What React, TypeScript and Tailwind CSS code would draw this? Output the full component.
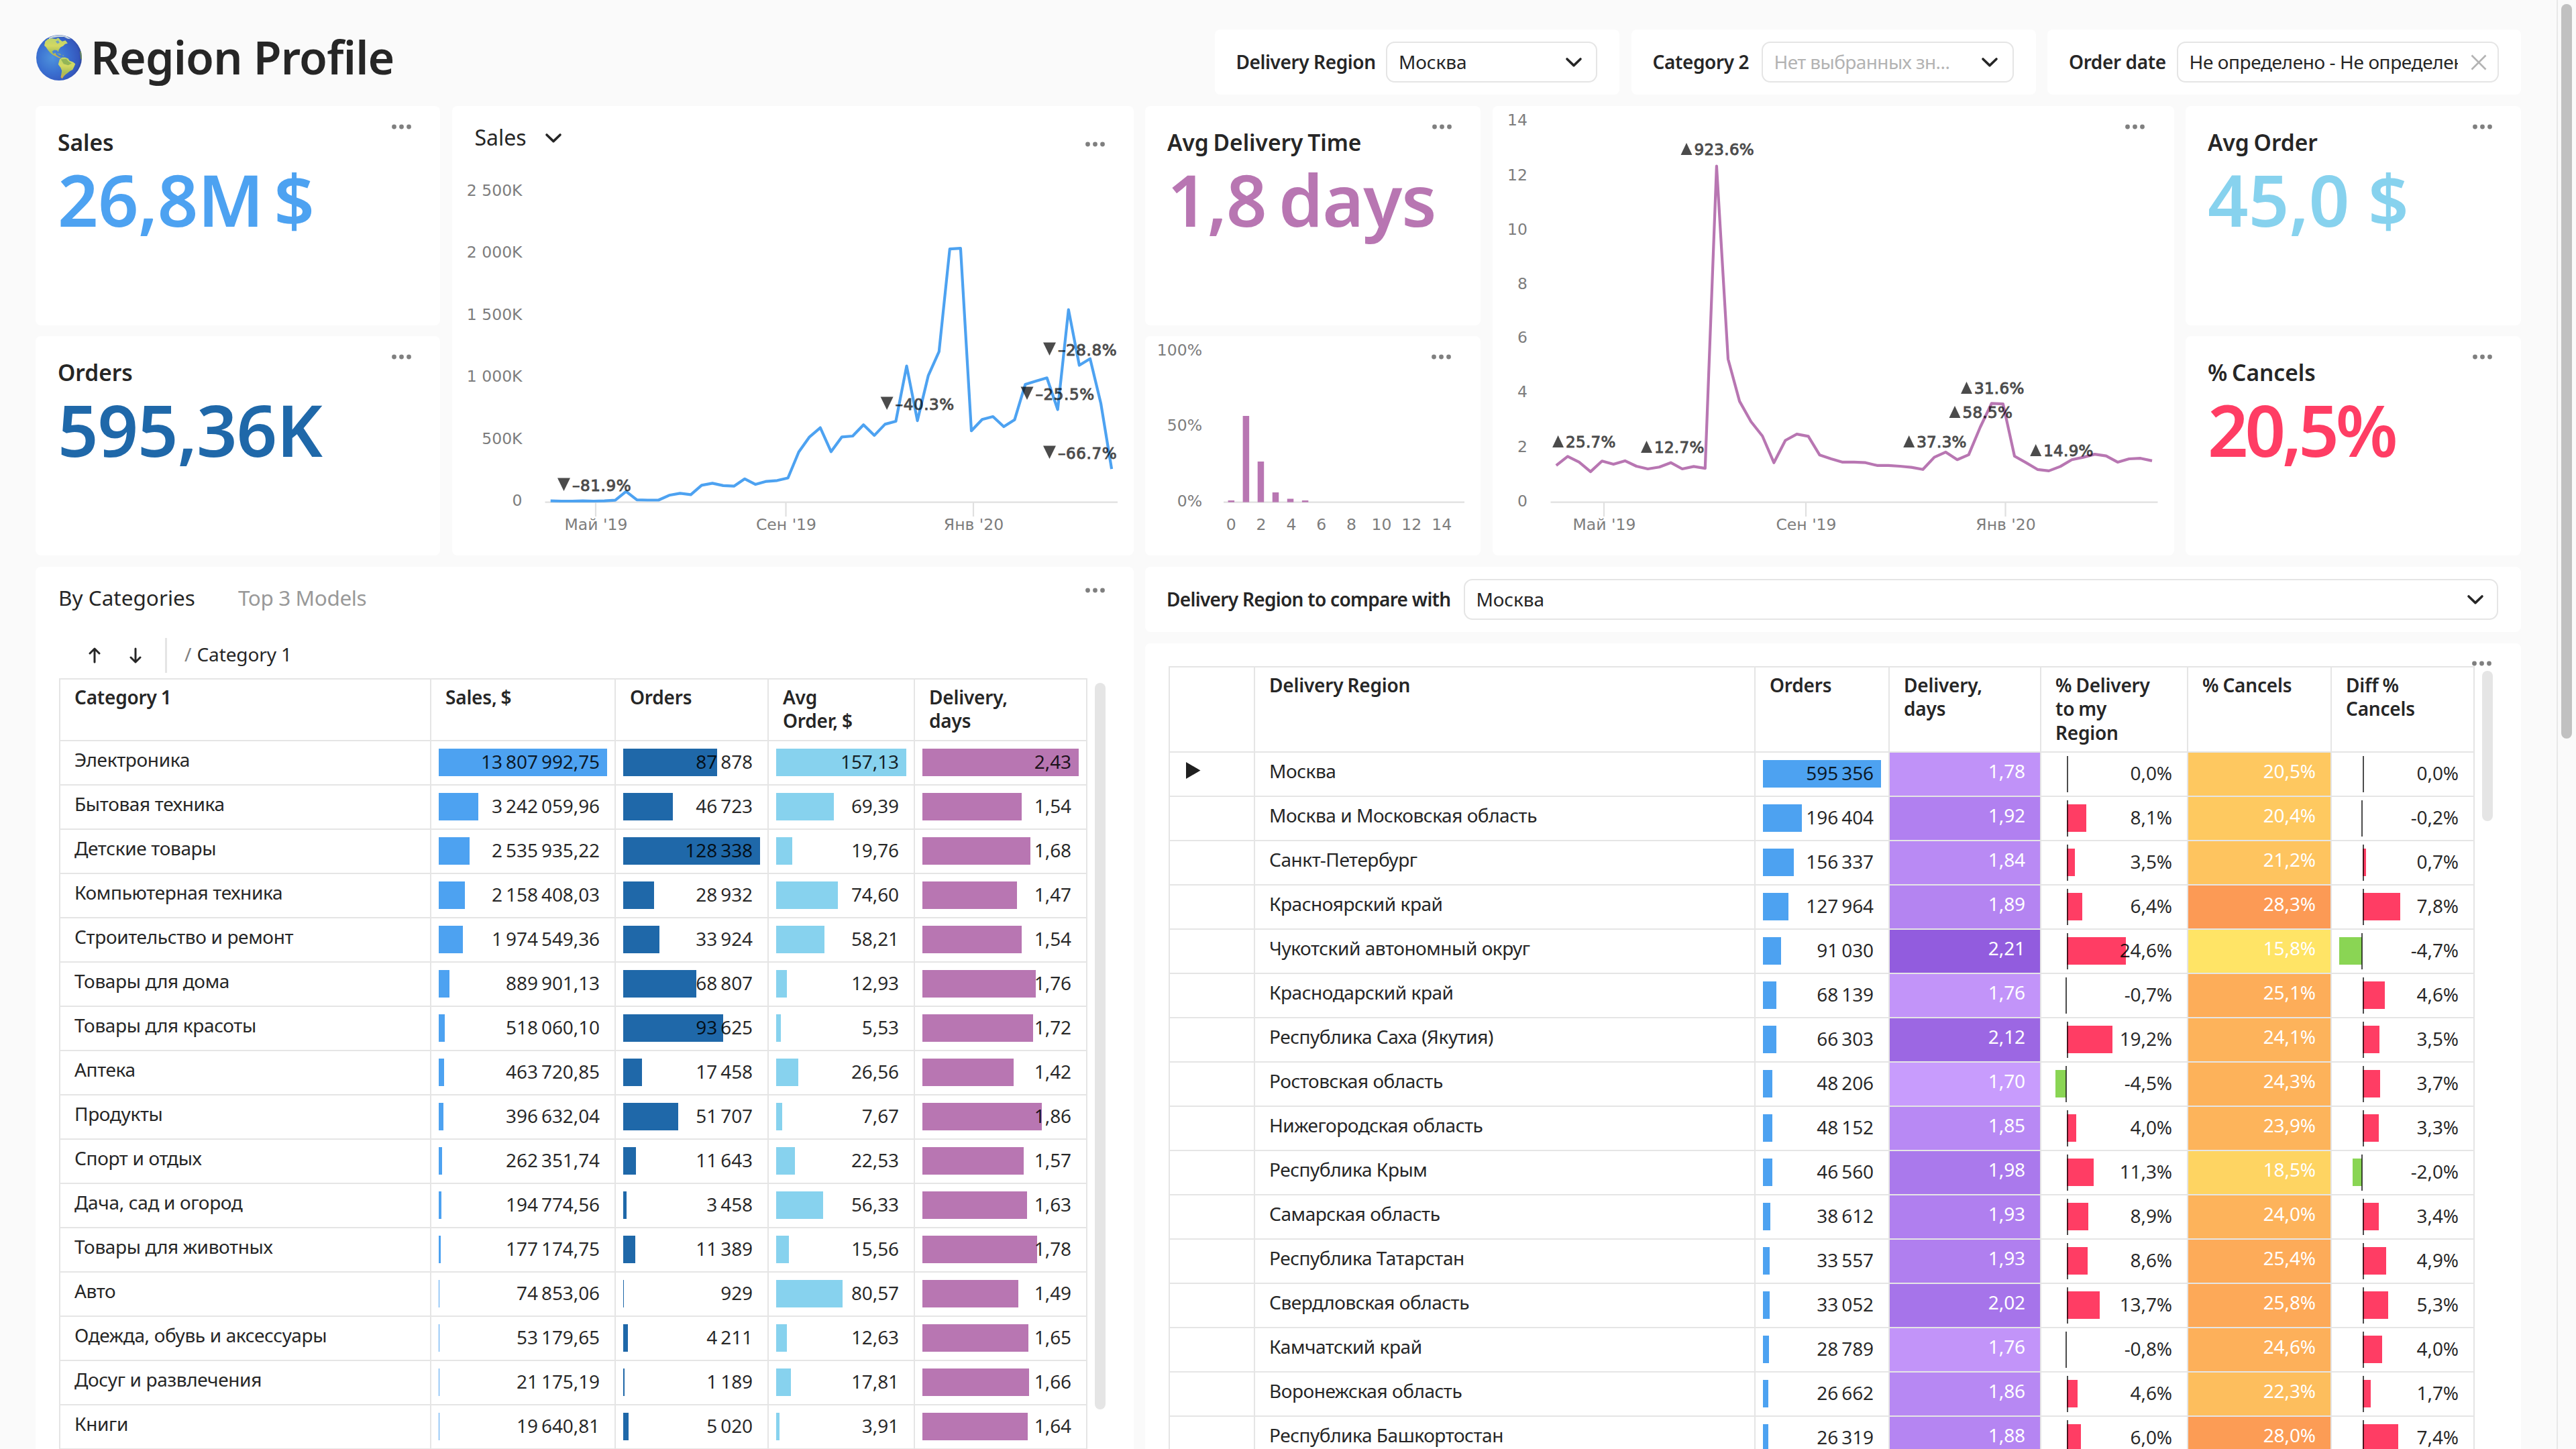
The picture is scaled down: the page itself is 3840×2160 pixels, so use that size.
import type { ReactNode } from "react";

const num = "whitespace-nowrap [word-spacing:-2px] tracking-[-0.1px]";

function Dots({ className = "" }: { className?: string }) {
  return (
    <svg className={`absolute h-2 w-[30px] ${className}`} viewBox="0 0 30 8" fill="#7f7f7f">
      <circle cx="3.5" cy="4" r="3.4" />
      <circle cx="14.5" cy="4" r="3.4" />
      <circle cx="25.5" cy="4" r="3.4" />
    </svg>
  );
}

function Chevron({ className = "" }: { className?: string }) {
  return (
    <svg className={`h-4 w-7 shrink-0 ${className}`} viewBox="0 0 28 16" fill="none" stroke="#262626" strokeWidth="3.6" strokeLinecap="round" strokeLinejoin="round">
      <path d="M4 3 L14 12.6 L24 3" />
    </svg>
  );
}

function Globe() {
  return (
    <svg className="h-[68px] w-[68px] shrink-0" viewBox="42 37 203 203">
      <defs>
        <radialGradient id="sea" cx="0.35" cy="0.5" r="0.68">
          <stop offset="0" stopColor="#4f93dc" />
          <stop offset="0.5" stopColor="#3a6fd0" />
          <stop offset="0.85" stopColor="#3558bd" />
          <stop offset="1" stopColor="#2b4191" />
        </radialGradient>
        <linearGradient id="land" x1="0" y1="0" x2="0" y2="1">
          <stop offset="0" stopColor="#bcd46c" />
          <stop offset="0.4" stopColor="#d3d862" />
          <stop offset="0.7" stopColor="#a9bf58" />
          <stop offset="1" stopColor="#d3a94a" />
        </linearGradient>
        <clipPath id="disc">
          <circle cx="143.5" cy="138.5" r="101.5" />
        </clipPath>
      </defs>
      <circle cx="143.5" cy="138.5" r="101.5" fill="url(#sea)" />
      <g clipPath="url(#disc)">
        <path d="M98 50 Q118 38 150 38 L178 43 L196 56 L182 54 L166 46 L140 46 L116 50 L100 56Z" fill="#c9d6dd" />
        <path d="M82 66 L94 56 L112 53 L130 56 L140 50 L150 60 L158 66 L172 62 L182 74 L170 78 L162 86 L150 92 L142 104 L140 114 L135 106 L122 104 L113 110 L117 121 L128 117 L130 126 L142 134 L152 138 L146 141 L132 134 L116 126 L104 116 L94 104 L86 92 L78 84Z" fill="url(#land)" />
        <path d="M128 66 L140 62 L146 72 L136 76Z" fill="#6e9fc6" />
        <path d="M134 119 L148 121 L154 126 L146 125Z M158 127 L166 129 L162 132Z" fill="#a9bf58" />
        <path d="M146 146 L156 138 L170 137 L184 142 L190 152 L206 158 L216 166 L210 180 L204 192 L192 198 L180 208 L172 214 L164 222 L158 232 L151 226 L154 210 L156 196 L150 182 L140 168Z" fill="url(#land)" />
        <path d="M152 146 L176 144 L186 156 L200 164 L184 172 L164 166Z" fill="#93b557" />
        <path d="M236 112 L248 104 L248 152 L240 142Z" fill="#6b8c5a" />
      </g>
    </svg>
  );
}

function Field({ label, width, children }: { label: string; width: string; children: ReactNode }) {
  return (
    <div className={`flex h-[97px] items-center justify-between rounded-lg bg-white pr-[33px] pl-[32px] ${width}`}>
      <span className="pb-0.5 text-[28px] font-semibold tracking-[-0.4px] whitespace-nowrap">{label}</span>
      {children}
    </div>
  );
}

const box = "flex h-[61px] items-center justify-between rounded-[13px] border-2 border-[#e5e5e5] bg-white pl-[17px] text-[28px] leading-[55px] whitespace-nowrap";

function Metric({ title, value, color }: { title: string; value: string; color: string }) {
  return (
    <section className="relative h-[327px] rounded-lg bg-white pt-[32px] pl-[33px]">
      <h2 className="text-[33.5px] leading-[44px] font-semibold whitespace-nowrap [word-spacing:-2px]">{title}</h2>
      <p className={`mt-[3px] text-[106px] leading-[120px] font-semibold whitespace-nowrap ${color}`}>{value}</p>
      <Dots className="top-[27px] right-[42px]" />
    </section>
  );
}

type Mark = [number, number, string];

function Marks({ items, down = false }: { items: Mark[]; down?: boolean }) {
  return (
    <g fill="#000" opacity="0.7" fontSize="23" fontFamily="'DejaVu Sans', sans-serif">
      {items.map(([x, y, t]) => (
        <g key={t}>
          <path d={down ? `M${x - 1} ${y - 19.5}h19l-9.5 19.5z` : `M${x} ${y}h17l-8.5 -18z`} />
          <text x={x + (down ? 21 : 20)} y={y} stroke="#000" strokeWidth="1" letterSpacing={down ? 0.6 : 0.3}>
            {t}
          </text>
        </g>
      ))}
    </g>
  );
}

function Axis({ x1, x2, labelX, ticks, rows }: { x1: number; x2: number; labelX: number; ticks: [number, string][]; rows: [number, string][] }) {
  return (
    <g fontSize="23.5" fill="#7d7d7d" fontFamily="'DejaVu Sans', sans-serif">
      <path d={`M${x1} 748.7H${x2}`} stroke="#e0e0e0" strokeWidth="2.2" />
      {ticks.map(([x, t]) => (
        <g key={t}>
          <path d={`M${x} 749v21`} stroke="#e0e0e0" strokeWidth="2.2" />
          <text x={x + 0.5} y="789.5" textAnchor="middle">{t}</text>
        </g>
      ))}
      {rows.map(([y, t]) => (
        <text key={t} x={labelX} y={y} textAnchor="end">{t}</text>
      ))}
    </g>
  );
}

// Weekly sales, thousands
const sales = [
  10, 8, 8, 10, 8, 10, 15, 86, 18, 16, 16, 55, 71, 60, 136, 152, 133, 129, 188, 143, 167, 174, 195, 405, 526, 600, 407, 526, 533, 624, 538, 628, 652,
  1098, 657, 1019, 1214, 2042, 2047, 575, 667, 690, 609, 664, 950, 976, 1002, 747, 1552, 1104, 1157, 797, 267,
];

// Weekly average delivery time, days
const delivery = [
  1.35, 1.68, 1.47, 1.12, 1.51, 1.39, 1.52, 1.32, 1.22, 1.29, 1.45, 1.22, 1.31, 1.24, 12.35, 5.26, 3.71, 2.96, 2.43, 1.45, 2.27, 2.5, 2.42, 1.73, 1.59,
  1.47, 1.47, 1.45, 1.35, 1.35, 1.32, 1.28, 1.2, 1.65, 1.84, 1.56, 1.74, 2.75, 3.63, 3.61, 1.69, 1.45, 1.2, 1.15, 1.31, 1.56, 1.65, 1.76, 1.7, 1.47,
  1.59, 1.61, 1.52,
];

function line(data: number[], x0: number, step: number, scale: number) {
  return data.map((v, i) => `${(x0 + step * i).toFixed(1)},${(748.5 - v * scale).toFixed(1)}`).join(" ");
}

function SalesChart() {
  return (
    <section className="relative h-[670px] rounded-lg bg-white">
      <div className="flex h-[70px] items-center gap-[26px] pt-[24px] pl-[34px]">
        <span className="text-[32px] leading-[46px] font-[450]">Sales</span>
        <Chevron className="mt-0.5" />
      </div>
      <svg className="block h-[600px] w-[1016px]" viewBox="674 228 1016 600">
        <Axis
          x1={812.5}
          x2={1666}
          labelX={778.5}
          ticks={[[888, "Май '19"], [1171.5, "Сен '19"], [1451, "Янв '20"]]}
          rows={[[292, "2 500K"], [384, "2 000K"], [476.5, "1 500K"], [569, "1 000K"], [662, "500K"], [753.5, "0"]]}
        />
        <polyline points={line(sales, 820.7, 16.085, 0.1848)} fill="none" stroke="#4da2f1" strokeWidth="4.2" strokeLinejoin="round" />
        <Marks
          down
          items={[[832, 732, "–81.9%"], [1313.6, 611, "–40.3%"], [1522.5, 596, "–25.5%"], [1556, 530, "–28.8%"], [1556, 684, "–66.7%"]]}
        />
      </svg>
      <Dots className="top-[53px] right-[42px]" />
    </section>
  );
}

function DeliveryChart() {
  return (
    <section className="relative h-[670px] rounded-lg bg-white">
      <svg className="block h-[670px] w-[1016px]" viewBox="2224.5 158 1016 670">
        <Axis
          x1={2311}
          x2={3216}
          labelX={2276.5}
          ticks={[[2390.5, "Май '19"], [2691.5, "Сен '19"], [2989, "Янв '20"]]}
          rows={[[187, "14"], [268.5, "12"], [350, "10"], [431, "8"], [510.5, "6"], [592, "4"], [673.5, "2"], [755, "0"]]}
        />
        <polyline points={line(delivery, 2319.3, 17.08, 40.55)} fill="none" stroke="#b876b2" strokeWidth="4.2" strokeLinejoin="round" />
        <Marks
          items={[
            [2313.6, 667, "25.7%"], [2445.5, 675, "12.7%"], [2505, 231, "923.6%"], [2922.5, 587, "31.6%"],
            [2905, 623, "58.5%"], [2836.7, 667, "37.3%"], [3025.7, 680, "14.9%"],
          ]}
        />
      </svg>
      <Dots className="top-[27px] right-[43px]" />
    </section>
  );
}

function Histogram() {
  const tops = [746, 620, 688, 734, 743.5, 746];
  return (
    <section className="relative h-[327px] rounded-lg bg-white">
      <svg className="block h-[327px] w-[500px]" viewBox="1707 501 500 327">
        <Axis x1={1824} x2={2183} labelX={1792} ticks={[]} rows={[[530, "100%"], [642, "50%"], [755, "0%"]]} />
        {tops.map((y, i) => (
          <rect key={i} x={1830.6 + i * 22.05} y={y} width="9.5" height={748.6 - y} fill="#b876b2" />
        ))}
        <g fontSize="23.5" fill="#7d7d7d" fontFamily="'DejaVu Sans', sans-serif">
          {[0, 2, 4, 6, 8, 10, 12, 14].map((n, i) => (
            <text key={n} x={1835.2 + i * 44.85} y="790" textAnchor="middle">{n}</text>
          ))}
        </g>
      </svg>
      <Dots className="top-[27px] right-[43px]" />
    </section>
  );
}

const categories: [string, string, string, string, string][] = [
  ["Электроника", "13 807 992,75", "87 878", "157,13", "2,43"],
  ["Бытовая техника", "3 242 059,96", "46 723", "69,39", "1,54"],
  ["Детские товары", "2 535 935,22", "128 338", "19,76", "1,68"],
  ["Компьютерная техника", "2 158 408,03", "28 932", "74,60", "1,47"],
  ["Строительство и ремонт", "1 974 549,36", "33 924", "58,21", "1,54"],
  ["Товары для дома", "889 901,13", "68 807", "12,93", "1,76"],
  ["Товары для красоты", "518 060,10", "93 625", "5,53", "1,72"],
  ["Аптека", "463 720,85", "17 458", "26,56", "1,42"],
  ["Продукты", "396 632,04", "51 707", "7,67", "1,86"],
  ["Спорт и отдых", "262 351,74", "11 643", "22,53", "1,57"],
  ["Дача, сад и огород", "194 774,56", "3 458", "56,33", "1,63"],
  ["Товары для животных", "177 174,75", "11 389", "15,56", "1,78"],
  ["Авто", "74 853,06", "929", "80,57", "1,49"],
  ["Одежда, обувь и аксессуары", "53 179,65", "4 211", "12,63", "1,65"],
  ["Досуг и развлечения", "21 175,19", "1 189", "17,81", "1,66"],
  ["Книги", "19 640,81", "5 020", "3,91", "1,64"],
];

const regions: [string, string, string, string, string, string][] = [
  ["Москва", "595 356", "1,78", "0,0", "20,5", "0,0"],
  ["Москва и Московская область", "196 404", "1,92", "8,1", "20,4", "-0,2"],
  ["Санкт-Петербург", "156 337", "1,84", "3,5", "21,2", "0,7"],
  ["Красноярский край", "127 964", "1,89", "6,4", "28,3", "7,8"],
  ["Чукотский автономный округ", "91 030", "2,21", "24,6", "15,8", "-4,7"],
  ["Краснодарский край", "68 139", "1,76", "-0,7", "25,1", "4,6"],
  ["Республика Саха (Якутия)", "66 303", "2,12", "19,2", "24,1", "3,5"],
  ["Ростовская область", "48 206", "1,70", "-4,5", "24,3", "3,7"],
  ["Нижегородская область", "48 152", "1,85", "4,0", "23,9", "3,3"],
  ["Республика Крым", "46 560", "1,98", "11,3", "18,5", "-2,0"],
  ["Самарская область", "38 612", "1,93", "8,9", "24,0", "3,4"],
  ["Республика Татарстан", "33 557", "1,93", "8,6", "25,4", "4,9"],
  ["Свердловская область", "33 052", "2,02", "13,7", "25,8", "5,3"],
  ["Камчатский край", "28 789", "1,76", "-0,8", "24,6", "4,0"],
  ["Воронежская область", "26 662", "1,86", "4,6", "22,3", "1,7"],
  ["Республика Башкортостан", "26 319", "1,88", "6,0", "28,0", "7,4"],
];

const parse = (s: string) => parseFloat(s.replace(/ /g, "").replace(",", "."));

function BarCell({ text, max, full, color }: { text: string; max: number; full: number; color: string }) {
  return (
    <div className="relative border-r-2 border-[#e5e5e5] pr-[22px] text-right">
      <div className={`absolute top-[11px] left-[11px] h-[41px] ${color}`} style={{ width: Math.max(1.2, (parse(text) / max) * full) }} />
      <span className={`relative leading-[60px] text-black/85 ${num}`}>{text}</span>
    </div>
  );
}

function DiffCell({ text, scale, zero }: { text: string; scale: number; zero: number }) {
  const v = parse(text);
  const w = v < 0 && v > -1 ? 0 : Math.abs(v) * scale;
  const origin = v < 0 ? zero - 2 : zero;
  return (
    <div className="relative border-r-2 border-[#e5e5e5] pr-[22px] text-right">
      <div
        className={`absolute top-[11px] h-[41px] ${v < 0 ? "bg-[#8ad554]" : "bg-[#ff3d64]"}`}
        style={{ width: w, left: v < 0 ? origin - w + 1 : origin }}
      />
      <div className="absolute top-[5px] h-[54px] w-[2px] bg-black/70" style={{ left: origin }} />
      <span className={`relative leading-[60px] text-black/85 ${num}`}>{text}%</span>
    </div>
  );
}

function HeatCell({ text, suffix = "", min, max, from, to }: { text: string; suffix?: string; min: number; max: number; from: number[]; to: number[] }) {
  const t = (parse(text) - min) / (max - min);
  const c = from.map((a, i) => Math.round(a + (to[i] - a) * t));
  return (
    <div className="border-r-2 border-[#e5e5e5] pr-[22px] text-right text-white" style={{ backgroundColor: `rgb(${c.join(",")})` }}>
      <span className={`leading-[54px] ${num}`}>
        {text}
        {suffix}
      </span>
    </div>
  );
}

function Head({ children }: { children?: ReactNode }) {
  return <div className="border-r-2 border-[#e5e5e5] pt-[9px] pl-[21px] leading-[35.4px] font-semibold tracking-[-0.2px] whitespace-pre-line [word-spacing:-1px]">{children}</div>;
}

function CategoriesTable() {
  const cols = "grid grid-cols-[553px_275px_228px_218px_257px] border-b-2 border-[#e5e5e5]";
  return (
    <div className="flex pl-[35px]">
      <div className="w-[1533px] border-t-2 border-l-2 border-[#e5e5e5] text-[28px] font-[450]">
        <div className={`${cols} h-[92px]`}>
          <Head>Category 1</Head>
          <Head>Sales, $</Head>
          <Head>Orders</Head>
          <Head>{"Avg\nOrder, $"}</Head>
          <Head>{"Delivery,\ndays"}</Head>
        </div>
        {categories.map(([name, s, o, a, d]) => (
          <div key={name} className={`${cols} h-[66px]`}>
            <div className="border-r-2 border-[#e5e5e5] pl-[21px] leading-[54px] tracking-[-0.35px]">{name}</div>
            <BarCell text={s} max={13807992.75} full={251} color="bg-[#4da2f1]" />
            <BarCell text={o} max={128338} full={204} color="bg-[#1f68a9]" />
            <BarCell text={a} max={157.13} full={194} color="bg-[#87d2ee]" />
            <BarCell text={d} max={2.43} full={233} color="bg-[#b876b2]" />
          </div>
        ))}
      </div>
      <div className="mt-[7px] ml-[11px] h-[1083px] w-4 rounded-full bg-[#e5e5e5]" />
    </div>
  );
}

function RegionsTable() {
  const cols = "grid grid-cols-[127px_746px_200px_226px_219px_214px_213px] border-b-2 border-[#e5e5e5]";
  return (
    <div className="flex pt-[34px] pl-[35px]">
      <div className="w-[1947px] border-t-2 border-l-2 border-[#e5e5e5] text-[28px] font-[450]">
        <div className={`${cols} h-[127px]`}>
          <Head />
          <Head>Delivery Region</Head>
          <Head>Orders</Head>
          <Head>{"Delivery,\ndays"}</Head>
          <Head>{"% Delivery\nto my\nRegion"}</Head>
          <Head>% Cancels</Head>
          <Head>{"Diff %\nCancels"}</Head>
        </div>
        {regions.map(([name, o, d, p, c, f], i) => (
          <div key={name} className={`${cols} h-[66px]`}>
            <div className="border-r-2 border-[#e5e5e5] pt-3.5 pl-6">
              {i === 0 && (
                <svg className="h-[25px] w-[22px]" viewBox="0 0 22 25" fill="#1f1f1f">
                  <path d="M0 0L21.5 12.5L0 25Z" />
                </svg>
              )}
            </div>
            <div className="border-r-2 border-[#e5e5e5] pl-[21px] leading-[54px] tracking-[-0.45px]">{name}</div>
            <BarCell text={o} max={595356} full={176} color="bg-[#4da2f1]" />
            <HeatCell text={d} min={1.7} max={2.21} from={[200, 156, 253]} to={[146, 92, 222]} />
            <DiffCell text={p} scale={3.56} zero={38} />
            <HeatCell text={c} suffix="%" min={15.8} max={28.3} from={[255, 228, 102]} to={[252, 154, 85]} />
            <DiffCell text={f} scale={7.15} zero={46} />
          </div>
        ))}
      </div>
      <div className="mt-[7px] ml-[11px] h-[224px] w-4 rounded-full bg-[#e5e5e5]" />
    </div>
  );
}

export default function App() {
  return (
    <div className="flex h-[2160px] w-[3840px] overflow-hidden bg-[#fafafa] font-['Noto_Sans',sans-serif] text-[#262626]">
      <main className="w-[3811px] pr-[53px] pl-[53px] font-[450]">
        <header className="flex h-[158px] items-start justify-between">
          <div className="flex gap-[13px] pt-[45px]">
            <div className="pt-[7px] pl-px">
              <Globe />
            </div>
            <h1 className="text-[68px] leading-[80px] font-semibold tracking-[-0.8px] whitespace-nowrap">Region Profile</h1>
          </div>
          <div className="flex gap-[17.5px] pt-[44px]">
            <Field label="Delivery Region" width="w-[603.5px]">
              <div className={`${box} w-[315px] pr-[19px]`}>
                <span className="tracking-[-0.1px]">Москва</span>
                <Chevron />
              </div>
            </Field>
            <Field label="Category 2" width="w-[603px]">
              <div className={`${box} w-[376px] pr-[20px]`}>
                <span className="tracking-[-0.6px] text-[#b3b3b3]">Нет выбранных зн...</span>
                <Chevron />
              </div>
            </Field>
            <Field label="Order date" width="w-[706px]">
              <div className={`${box} w-[480.5px] pr-[16px]`}>
                <span className="w-[400px] overflow-hidden tracking-[-0.4px]">Не определено - Не определено</span>
                <svg className="h-6 w-6" viewBox="0 0 24 24" fill="none" stroke="#b3b3b3" strokeWidth="2.6">
                  <path d="M1.5 1.5L22.5 22.5M22.5 1.5L1.5 22.5" />
                </svg>
              </div>
            </Field>
          </div>
        </header>

        <div className="grid grid-cols-[603px_1016px_500px_1016px_500px] gap-x-[17.5px]">
          <div className="flex flex-col gap-4">
            <Metric title="Sales" value="26,8M $" color="text-[#4da2f1] tracking-[-0.7px] [word-spacing:-11px]" />
            <Metric title="Orders" value="595,36K" color="text-[#1f68a9] tracking-[-1.1px]" />
          </div>
          <SalesChart />
          <div className="flex flex-col gap-4">
            <Metric title="Avg Delivery Time" value="1,8 days" color="text-[#b876b2] tracking-[-1.1px] [word-spacing:-8px]" />
            <Histogram />
          </div>
          <DeliveryChart />
          <div className="flex flex-col gap-4">
            <Metric title="Avg Order" value="45,0 $" color="text-[#87d2ee]" />
            <Metric title="% Cancels" value="20,5%" color="text-[#ff3d64] tracking-[-5.2px]" />
          </div>
        </div>

        <div className="mt-[17px] grid grid-cols-[1636.5px_2051px] gap-x-[17.5px]">
          <section className="relative h-[1400px] rounded-lg bg-white pt-4">
            <div className="flex h-[60px] gap-[64px] pl-[34px] text-[31.5px] leading-[60px]">
              <span>By Categories</span>
              <span className="tracking-[-0.4px] text-[#999]">Top 3 Models</span>
            </div>
            <div className="mt-[30px] mb-2 flex h-[52px] items-center pl-[79px]">
              <svg className="h-[24px] w-[18px]" viewBox="0 0 18 24" fill="none" stroke="#262626" strokeWidth="3" strokeLinecap="round" strokeLinejoin="round">
                <path d="M9 22V2M2 9L9 2L16 9" />
              </svg>
              <svg className="ml-[43px] h-[24px] w-[18px]" viewBox="0 0 18 24" fill="none" stroke="#262626" strokeWidth="3" strokeLinecap="round" strokeLinejoin="round">
                <path d="M9 2V22M2 15L9 22L16 15" />
              </svg>
              <div className="ml-[35px] h-full w-[3px] bg-[#e5e5e5]" />
              <span className="ml-[26px] pb-1 text-[28px] text-[#808080]">/</span>
              <span className="ml-[8px] pb-1 text-[28px] tracking-[-0.1px]">Category 1</span>
            </div>
            <CategoriesTable />
            <Dots className="top-[31px] right-[42px]" />
          </section>
          <div className="flex flex-col gap-[17px]">
            <section className="flex h-[97px] items-center justify-between rounded-lg bg-white pr-[34px] pl-[32px]">
              <span className="pb-0.5 text-[28px] font-semibold tracking-[-0.7px]">Delivery Region to compare with</span>
              <div className={`${box} w-[1542.5px] pr-[18px]`}>
                <span className="tracking-[-0.1px]">Москва</span>
                <Chevron />
              </div>
            </section>
            <section className="relative h-[1300px] rounded-lg bg-white">
              <RegionsTable />
              <Dots className="top-[26px] right-[43px]" />
            </section>
          </div>
        </div>
      </main>
      <aside className="w-[29px] border-l-2 border-[#e8e8e8] bg-[#fafafa] pt-[6px] pl-[5px]">
        <div className="h-[1095px] w-4 rounded-full bg-[#c1c1c1]" />
      </aside>
    </div>
  );
}
